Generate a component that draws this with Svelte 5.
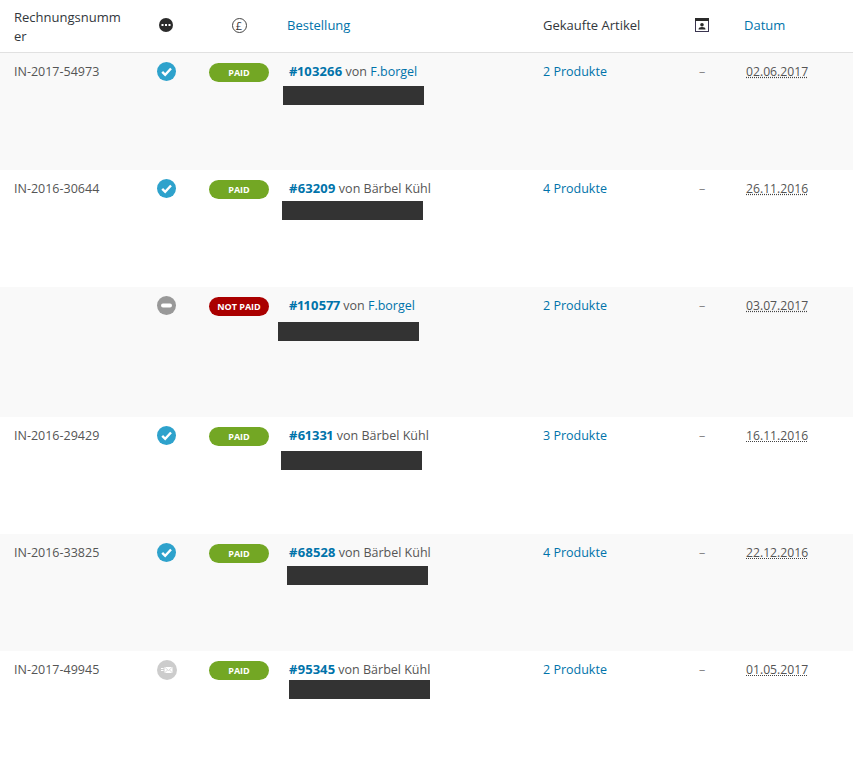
<script>
  const rows = [
    { invoice: "IN-2017-54973", status: "check", paid: true, order: "#103266", by: "F.borgel", byLink: true, bar: -6, barTop: 5, items: "2 Produkte", date: "02.06.2017", height: 117, alt: true },
    { invoice: "IN-2016-30644", status: "check", paid: true, order: "#63209", by: "Bärbel Kühl", byLink: false, bar: -7, barTop: 3, items: "4 Produkte", date: "26.11.2016", height: 117, alt: false },
    { invoice: "", status: "minus", paid: false, order: "#110577", by: "F.borgel", byLink: true, bar: -11, barTop: 7, items: "2 Produkte", date: "03.07.2017", height: 130, alt: true },
    { invoice: "IN-2016-29429", status: "check", paid: true, order: "#61331", by: "Bärbel Kühl", byLink: false, bar: -8, barTop: 6, items: "3 Produkte", date: "16.11.2016", height: 117, alt: false },
    { invoice: "IN-2016-33825", status: "check", paid: true, order: "#68528", by: "Bärbel Kühl", byLink: false, bar: -2, barTop: 4, items: "4 Produkte", date: "22.12.2016", height: 117, alt: true },
    { invoice: "IN-2017-49945", status: "mail", paid: true, order: "#95345", by: "Bärbel Kühl", byLink: false, bar: 0, barTop: 1, items: "2 Produkte", date: "01.05.2017", height: 106, alt: false }
  ];
</script>

<main>
  <div class="row head">
    <div class="first">Rechnungsnummer</div>
    <div class="icon">
      <svg width="14" height="14" viewBox="0 0 14 14">
        <circle cx="7" cy="7" r="7" fill="#2b2b2b" />
        <rect x="2.500" y="6" width="2" height="2" fill="#fff" />
        <rect x="6" y="6" width="2" height="2" fill="#fff" />
        <rect x="9.500" y="6" width="2" height="2" fill="#fff" />
      </svg>
    </div>
    <div class="pay"><span class="pound">£</span></div>
    <div class="orderhead"><a href="#top">Bestellung</a></div>
    <div>Gekaufte Artikel</div>
    <div class="icon">
      <svg width="14" height="14" viewBox="0 0 14 14">
        <rect x="0.500" y="0.500" width="13" height="13" fill="#fff" stroke="#3a3550" />
        <rect x="0" y="0" width="14" height="3" fill="#2b2b2b" />
        <circle cx="7" cy="6.700" r="1.800" fill="#2b2b2b" />
        <path d="M3.500 11.500c0-2 1.500-2.600 3.500-2.600s3.500.6 3.500 2.600z" fill="#2b2b2b" />
      </svg>
    </div>
    <div class="datehead"><a href="#top">Datum</a></div>
  </div>

  {#each rows as row}
    <div class="row" class:alt={row.alt} style="height: {row.height}px">
      <div class="first">{row.invoice}</div>
      <div class="icon status">
        {#if row.status === "check"}
          <svg width="19" height="19" viewBox="0 0 19 19">
            <circle cx="9.500" cy="9.500" r="9.500" fill="#2ea2cc" />
            <path d="M5.200 9.800l3 3 5.800-6.300" fill="none" stroke="#fff" stroke-width="2.400" />
          </svg>
        {:else if row.status === "minus"}
          <svg width="19" height="19" viewBox="0 0 19 19">
            <circle cx="9.500" cy="9.500" r="9.500" fill="#999" />
            <rect x="4" y="7.500" width="11" height="4" rx="2" fill="#fff" />
          </svg>
        {:else}
          <svg class="mail" width="20" height="20" viewBox="0 0 20 20">
            <circle cx="10" cy="10" r="10" fill="#ccc" />
            <rect x="7.500" y="7" width="8" height="6" fill="#fff" />
            <path d="M7.500 7l4 3.500 4-3.500M7.500 13l3-3M15.500 13l-3-3" fill="none" stroke="#ccc" stroke-width="0.700" />
            <rect x="4" y="8" width="2.500" height="1" fill="#fff" />
            <rect x="4" y="10" width="2.500" height="1" fill="#fff" />
          </svg>
        {/if}
      </div>
      <div class="pay">
        <span class="badge" class:unpaid={!row.paid}>{row.paid ? "PAID" : "NOT PAID"}</span>
      </div>
      <div class="order">
        <div>
          <a href="#top" class="num">{row.order}</a> von
          {#if row.byLink}<a href="#top">{row.by}</a>{:else}{row.by}{/if}
        </div>
        <div class="bar" style="margin-left: {row.bar}px; margin-top: {row.barTop}px"></div>
      </div>
      <div><a href="#top">{row.items}</a></div>
      <div class="dash">–</div>
      <div class="date"><abbr>{row.date}</abbr></div>
    </div>
  {/each}
</main>

<style>
  :global(body) {
    margin: 0;
    background: #fff;
  }

  main {
    width: 853px;
    height: 757px;
    overflow: hidden;
    font-family: "Open Sans", "Noto Sans", sans-serif;
    font-size: 12.5px;
    line-height: 19px;
    color: #555;
  }

  a {
    color: #0073aa;
    text-decoration: none;
  }

  .row {
    display: grid;
    grid-template-columns: 143px 46px 100px 254px 130px 58px 1fr;
    box-sizing: border-box;
    padding-top: 9px;
  }

  .alt {
    background: #f9f9f9;
  }

  .head {
    height: 53px;
    padding-top: 8px;
    grid-template-rows: 34px;
    align-items: center;
    border-bottom: 1px solid #e1e1e1;
    font-size: 13px;
    color: #32373c;
  }

  .first {
    padding-left: 14px;
    width: 110px;
    word-break: break-all;
  }

  .head .first {
    align-self: start;
  }

  .icon {
    display: flex;
    justify-content: center;
  }

  .status {
    height: 19px;
  }

  .mail {
    margin-left: 1px;
    flex: none;
  }

  .pay {
    display: flex;
    justify-content: center;
  }

  .pound {
    width: 15px;
    height: 15px;
    box-sizing: border-box;
    border: 1px solid #444;
    border-radius: 50%;
    font-size: 11px;
    line-height: 13px;
    text-align: center;
    color: #333;
  }

  .badge {
    width: 60px;
    height: 19px;
    margin-top: 1px;
    border-radius: 10px;
    background: #73a724;
    color: #fff;
    font-size: 9px;
    font-weight: 700;
    line-height: 19px;
    text-align: center;
  }

  .badge.unpaid {
    background: #a00;
  }

  .num {
    font-weight: 700;
    font-size: 13px;
    font-variant-numeric: proportional-nums;
  }

  .orderhead {
    margin-left: -2px;
  }

  .datehead {
    padding-left: 13px;
  }

  .bar {
    width: 141px;
    height: 19px;
    background: #333;
  }

  .dash {
    text-align: center;
    color: #888;
  }

  .date {
    padding-left: 15px;
    font-size: 12.2px;
  }

  abbr {
    text-decoration: underline dotted #444;
    text-underline-offset: 1px;
  }
</style>
